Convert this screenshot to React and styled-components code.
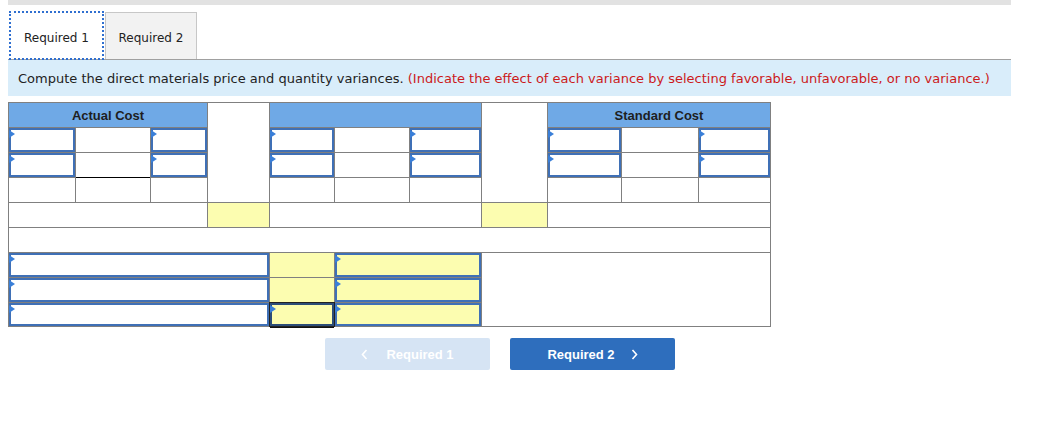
import React from 'react';
import styled, { createGlobalStyle, css } from 'styled-components';

const GlobalStyle = createGlobalStyle`
  html, body { margin: 0; padding: 0; background: #fff; }
  body { font-family: "DejaVu Sans", Verdana, sans-serif; color: #222; }
  * { box-sizing: border-box; }
`;

const Page = styled.div`
  width: 1011px;
  padding-left: 8px;
`;

const TopBar = styled.div`
  height: 5px;
  background: #e2e2e2;
`;

const TabRow = styled.div`
  display: flex;
  gap: 2px;
  padding: 7px 0 0 2px;
`;

const Tab = styled.div`
  height: 47px;
  width: ${p => p.$w}px;
  display: flex;
  align-items: center;
  justify-content: center;
  padding-top: 3px;
  font-size: 12px;
  color: #222;
  border: 1px solid #c7c7c7;
  border-bottom: none;
  background: ${p => (p.$active ? '#fff' : '#f2f2f2')};
  ${p => p.$active && css`
    border-color: transparent;
    outline: 2px dotted #2f6fd0;
    outline-offset: -1px;
  `}
`;

const Band = styled.div`
  height: 37px;
  border-top: 1px solid #a0a0a0;
  background: #d9edfa;
  display: flex;
  align-items: center;
  padding-left: 10px;
  font-size: 13px;
  color: #222;
  white-space: nowrap;
`;

const Red = styled.span`
  color: #cc1a1a;
`;

const Grid = styled.div`
  margin-top: 6px;
  display: grid;
  grid-template-columns: 66px 74px 56px 61px 64px 74px 71px 65px 73px 76px 71px;
  grid-template-rows: repeat(8, 24px) 23px;
  gap: 1px;
  padding: 1px;
  background: #808080;
  width: max-content;
`;

const Cell = styled.div`
  grid-column: ${p => p.$c} / span ${p => p.$cs || 1};
  grid-row: ${p => p.$r} / span ${p => p.$rs || 1};
  background: ${p => p.$bg || '#fff'};
  ${p => p.$under && css`box-shadow: 0 1px 0 #000;`}
`;

const Head = styled(Cell)`
  background: #6fa9e6;
  display: flex;
  align-items: center;
  justify-content: center;
  font-family: "Liberation Sans", Arial, sans-serif;
  font-weight: bold;
  font-size: 13px;
  color: #1e1e1e;
`;

const Input = styled(Cell)`
  position: relative;
  border: 2px solid ${p => (p.$dark ? '#2c4d78' : '#3f70b6')};
  ${p => p.$total && css`box-shadow: 0 0 0 1px #222, 0 2px 0 0 #111;`}
  &::before {
    content: '';
    position: absolute;
    left: -2px;
    top: 0;
    border-left: 6px solid #3a7fd8;
    border-top: 4px solid transparent;
    border-bottom: 4px solid transparent;
  }
`;

const ButtonRow = styled.div`
  display: flex;
  gap: 20px;
  padding-left: 317px;
  margin-top: 11px;
`;

const NavButton = styled.div`
  width: 165px;
  height: 32px;
  border-radius: 2px;
  display: flex;
  align-items: center;
  justify-content: center;
  gap: ${p => p.$gap}px;
  font-family: "Liberation Sans", Arial, sans-serif;
  font-weight: bold;
  font-size: 13px;
  color: #fff;
  background: ${p => (p.$disabled ? '#d6e4f4' : '#2e6ebd')};
`;

const Chevron = ({ dir }) => (
  <svg width="7" height="11" viewBox="0 0 7 11">
    <polyline
      points={dir === 'left' ? '5.5,1 1.5,5.5 5.5,10' : '1.5,1 5.5,5.5 1.5,10'}
      fill="none"
      stroke="#fff"
      strokeWidth="1.6"
    />
  </svg>
);

const groups = [1, 5, 9];
const YELLOW = '#fcfdb0';

export default function App() {
  return (
    <>
      <GlobalStyle />
      <Page>
        <TopBar />
        <TabRow>
          <Tab $active $w={93}>Required 1</Tab>
          <Tab $w={92}>Required 2</Tab>
        </TabRow>
        <Band>
          Compute the direct materials price and quantity variances.&nbsp;
          <Red>(Indicate the effect of each variance by selecting favorable, unfavorable, or no variance.)</Red>
        </Band>
        <Grid>
          <Head $c={1} $cs={3} $r={1}>Actual Cost</Head>
          <Cell $c={4} $r={1} $rs={4} />
          <Head $c={5} $cs={3} $r={1} />
          <Cell $c={8} $r={1} $rs={4} />
          <Head $c={9} $cs={3} $r={1}>Standard Cost</Head>

          {groups.map(g => (
            <React.Fragment key={g}>
              <Input $c={g} $r={2} />
              <Cell $c={g + 1} $r={2} />
              <Input $c={g + 2} $r={2} />
              <Input $c={g} $r={3} />
              <Cell $c={g + 1} $r={3} $under={g === 1} />
              <Input $c={g + 2} $r={3} />
              <Cell $c={g} $r={4} />
              <Cell $c={g + 1} $r={4} />
              <Cell $c={g + 2} $r={4} />
            </React.Fragment>
          ))}

          <Cell $c={1} $cs={3} $r={5} />
          <Cell $c={4} $r={5} $bg={YELLOW} />
          <Cell $c={5} $cs={3} $r={5} />
          <Cell $c={8} $r={5} $bg={YELLOW} />
          <Cell $c={9} $cs={3} $r={5} />

          <Cell $c={1} $cs={11} $r={6} />

          <Input $c={1} $cs={4} $r={7} />
          <Cell $c={5} $r={7} $bg={YELLOW} />
          <Input $c={6} $cs={2} $r={7} $bg={YELLOW} />
          <Cell $c={8} $cs={4} $r={7} $rs={3} />

          <Input $c={1} $cs={4} $r={8} />
          <Cell $c={5} $r={8} $bg={YELLOW} $under />
          <Input $c={6} $cs={2} $r={8} $bg={YELLOW} />

          <Input $c={1} $cs={4} $r={9} />
          <Input $c={5} $r={9} $bg={YELLOW} $dark $total />
          <Input $c={6} $cs={2} $r={9} $bg={YELLOW} />
        </Grid>
        <ButtonRow>
          <NavButton $disabled $gap={18}>
            <Chevron dir="left" />
            <span>Required 1</span>
          </NavButton>
          <NavButton $gap={16}>
            <span>Required 2</span>
            <Chevron dir="right" />
          </NavButton>
        </ButtonRow>
      </Page>
    </>
  );
}
